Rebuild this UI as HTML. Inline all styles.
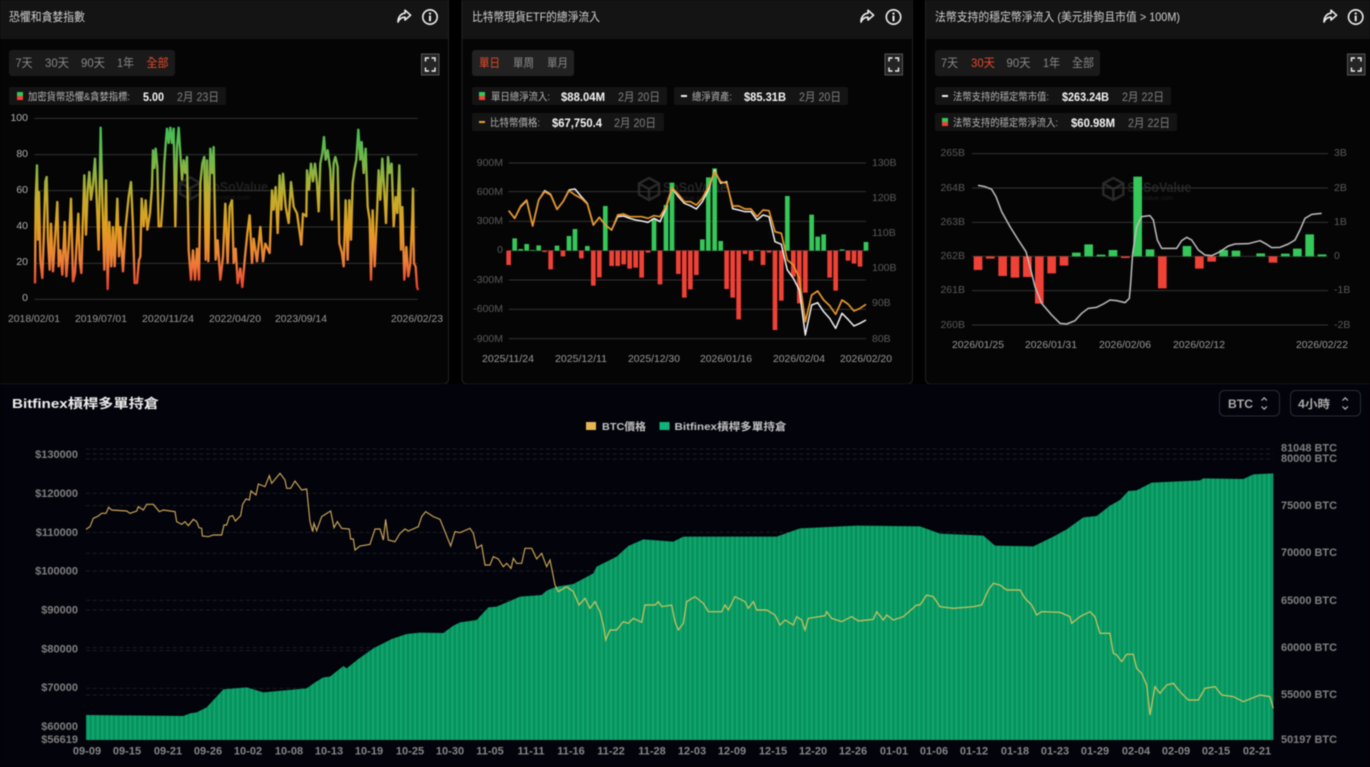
<!DOCTYPE html>
<html><head><meta charset="utf-8"><title>Dashboard</title>
<style>
html,body{margin:0;padding:0;background:#000;width:1370px;height:767px;overflow:hidden}
svg{display:block;position:absolute;left:0;top:0;filter:blur(.4px)}
text{font-family:"Liberation Sans","Noto Sans CJK TC",sans-serif;font-size:11px;fill:#999}
.ti{font-size:12px;fill:#d0d0d0}
.tb{font-size:12px;fill:#888}
.on{font-size:12px;fill:#e5492c}
.lg{font-size:10.5px;fill:#b5b5b5}
.v{font-size:12px;font-weight:700;fill:#f6f6f6}
.d{font-size:12px;fill:#808080}
.ax{font-size:10.5px;fill:#b0b0b0}
.ax2{font-size:10.5px;fill:#5a5a5a}
.xl{font-size:10.5px;fill:#9a9a9a}
.bl{font-size:11px;font-weight:700;fill:#808080}
.bx{font-size:11px;font-weight:700;fill:#868686;text-anchor:middle}
</style></head><body>
<svg width="1370" height="767" viewBox="0 0 1370 767" xmlns="http://www.w3.org/2000/svg">
<defs>
<linearGradient id="fg" gradientUnits="userSpaceOnUse" x1="0" y1="380" x2="0" y2="870">
<stop offset="0" stop-color="#3fbf55"/><stop offset=".2" stop-color="#72b84a"/><stop offset=".42" stop-color="#c0ad2c"/><stop offset=".62" stop-color="#e29e20"/><stop offset=".82" stop-color="#ee7f38"/><stop offset="1" stop-color="#ee3b30"/>
</linearGradient>
<pattern id="st" patternUnits="userSpaceOnUse" width="14" height="40" x="258"><rect width="14" height="40" fill="#07915b"/><rect x="4" width="6" height="40" fill="#12a670"/></pattern>
<clipPath id="ac"><polygon points="258,990 550,993 570,985 590,982 620,967 670,913 740,907 790,922 920,910 945,892 970,877 990,875 1030,843 1040,850 1075,822 1120,790 1175,762 1220,747 1260,743 1330,744 1360,722 1380,712 1430,705 1465,667 1490,665 1560,635 1625,630 1640,617 1670,605 1720,597 1780,565 1790,545 1850,515 1885,483 1930,463 2020,470 2050,455 2330,455 2400,430 2570,422 2760,424 2820,446 2950,452 2985,482 3100,484 3160,455 3200,433 3250,397 3290,393 3330,362 3360,345 3385,318 3410,316 3455,293 3600,286 3610,280 3730,282 3760,268 3820,265 3820,1065 258,1065"/></clipPath>
<polyline id="pr" fill="none" points="258,433 270,425 280,400 295,393 305,385 318,385 326,367 335,375 380,378 390,385 410,378 415,365 430,375 440,358 460,358 478,380 490,375 525,380 530,410 545,418 555,410 565,422 580,403 590,410 597,428 605,430 607,453 625,455 640,450 665,450 672,420 680,420 688,395 698,392 706,408 722,392 728,358 738,342 748,345 753,318 768,330 775,297 795,305 808,272 815,295 840,265 855,285 860,310 872,310 885,288 905,315 920,312 930,410 938,440 942,415 950,437 965,395 985,382 992,378 1002,428 1012,410 1025,430 1048,432 1052,462 1060,462 1065,495 1080,483 1110,478 1125,432 1140,432 1150,465 1157,403 1165,465 1185,470 1200,445 1215,432 1225,438 1255,425 1265,395 1277,380 1300,395 1320,403 1335,440 1352,483 1365,440 1380,443 1410,430 1420,445 1430,490 1445,480 1455,540 1470,540 1480,515 1495,522 1510,545 1520,535 1533,550 1540,520 1550,535 1565,535 1575,490 1595,490 1610,522 1625,505 1640,545 1650,525 1665,600 1675,620 1700,605 1720,620 1737,660 1755,640 1770,670 1785,650 1800,680 1810,720 1817,765 1830,735 1850,735 1870,710 1885,715 1900,700 1925,712 1935,660 1965,660 1975,650 1985,665 2015,660 2025,710 2035,735 2050,715 2060,650 2085,635 2110,655 2125,680 2165,680 2175,660 2185,675 2205,635 2235,650 2245,670 2260,650 2270,675 2300,675 2325,690 2340,720 2355,705 2380,720 2390,695 2405,705 2415,735 2425,700 2475,692 2480,680 2495,700 2525,710 2555,695 2575,708 2620,703 2630,680 2650,705 2660,690 2680,705 2710,695 2750,660 2760,660 2780,630 2800,635 2820,665 2860,670 2920,665 2945,660 2965,615 2980,595 3000,600 3020,615 3060,615 3075,640 3095,660 3110,690 3125,680 3180,682 3210,695 3215,715 3240,695 3270,680 3285,695 3300,745 3330,745 3340,805 3350,810 3365,830 3380,808 3400,808 3410,850 3425,865 3440,900 3450,990 3465,905 3480,925 3500,900 3520,895 3540,920 3565,945 3595,945 3615,910 3645,905 3665,930 3700,935 3730,950 3780,930 3810,935 3820,970"/>
<polyline id="fgl" fill="none" points="104,850 106,600 110,495 113,720 116,575 120,780 126,835 130,720 135,545 139,530 143,720 148,810 152,670 158,815 165,700 171,605 175,800 180,750 186,825 193,665 198,830 205,740 212,595 218,845 224,820 230,710 234,640 238,780 243,820 247,680 252,525 257,705 262,570 267,515 272,600 278,555 284,475 290,620 295,750 301,382 306,600 312,810 317,540 322,868 327,665 333,800 338,680 343,800 351,595 356,770 360,680 368,815 375,690 385,590 392,545 398,680 403,850 410,850 416,780 420,770 424,595 430,680 436,600 441,690 449,640 455,560 458,450 462,505 466,445 471,500 475,680 482,680 488,590 492,490 497,420 500,385 505,430 510,382 515,430 520,385 525,680 530,440 535,382 540,460 545,540 550,480 555,520 560,470 565,750 572,840 578,750 584,840 590,745 596,840 600,550 606,490 612,470 616,780 620,480 624,785 630,445 636,520 640,440 646,780 652,720 660,840 668,770 675,610 682,790 688,620 695,600 700,790 706,745 712,850 720,805 726,862 734,770 741,700 748,645 755,790 760,715 770,785 780,680 788,785 795,730 808,760 815,570 820,630 826,560 832,700 838,525 843,630 848,520 856,620 865,670 872,545 880,620 890,640 897,690 903,735 908,640 918,650 920,510 926,570 932,490 938,545 944,490 950,550 955,635 960,490 966,460 971,410 976,480 982,450 990,510 995,660 1000,490 1005,470 1012,500 1017,730 1025,760 1030,800 1036,600 1042,780 1047,600 1052,720 1057,550 1062,510 1068,480 1074,388 1080,480 1084,425 1090,520 1096,445 1102,620 1108,660 1112,840 1117,630 1123,800 1130,640 1135,510 1140,600 1146,475 1151,560 1157,670 1163,470 1168,520 1174,490 1180,680 1186,590 1191,640 1197,495 1202,750 1206,620 1212,840 1218,740 1224,830 1230,790 1236,650 1238,565 1241,790 1246,800 1250,860 1253,870"/>
<g id="share"><path d="M8 1.2 L13.6 6.2 L8 11 V8.2 C4.6 8 2.4 9.8 1 13 C1 8.2 3.6 4.6 8 4.2 Z" fill="none" stroke="#eee" stroke-width="1.6" stroke-linejoin="round"/></g>
<g id="info"><circle r="7.2" fill="none" stroke="#eee" stroke-width="1.6"/><rect x="-1" y="-1.4" width="2" height="5.6" fill="#eee"/><rect x="-1" y="-4.4" width="2" height="1.9" fill="#eee"/></g>
<g id="fs"><rect x=".5" y=".5" width="17.5" height="21" fill="#242424" stroke="#555"/><path d="M4.5 8 V4.5 H8 M10.5 4.5 H14 V8 M4.5 14 V17.5 H8 M10.5 17.5 H14 V14" fill="none" stroke="#eee" stroke-width="1.4"/></g>
<g id="sq"><rect width="6" height="4" fill="#35c759"/><rect y="4" width="6" height="4" fill="#ef4136"/></g>
<g id="wm"><path d="M0 -11 L10 -5.5 V5.5 L0 11 L-10 5.5 V-5.5 Z M-10 -5.5 L0 0 L10 -5.5 M0 0 V11" fill="none" stroke="#3a3a3a" stroke-width="2.4"/><text x="14" y="3" style="font-size:14px;font-weight:700;fill:#333" textLength="64" lengthAdjust="spacingAndGlyphs">SoSoValue</text><text x="16" y="11" style="font-size:6px;fill:#2c2c2c" textLength="44" lengthAdjust="spacingAndGlyphs">sosovalue.com</text></g>
</defs>

<rect width="1370" height="767" fill="#000"/>

<!-- PANEL 1 -->
<rect x="-4" y="-4" width="452.500" height="388" rx="5" fill="#050505" stroke="#222"/>
<rect x="0" y="0" width="448" height="39" fill="#141414"/>
<text class="ti" x="9" y="21" textLength="76" lengthAdjust="spacingAndGlyphs">恐懼和貪婪指數</text>
<use href="#share" x="397" y="9"/><use href="#info" x="430" y="17"/>
<rect x="9" y="50" width="166" height="26" rx="3" fill="#1a1a1a"/>
<text class="tb" x="15.500" y="67" textLength="17" lengthAdjust="spacingAndGlyphs">7天</text>
<text class="tb" x="45" y="67" textLength="24" lengthAdjust="spacingAndGlyphs">30天</text>
<text class="tb" x="81" y="67" textLength="24" lengthAdjust="spacingAndGlyphs">90天</text>
<text class="tb" x="117" y="67" textLength="17" lengthAdjust="spacingAndGlyphs">1年</text>
<text class="on" x="146.500" y="67" textLength="22" lengthAdjust="spacingAndGlyphs">全部</text>
<use href="#fs" x="421" y="53.500"/>
<rect x="9" y="87" width="217" height="18" rx="2" fill="#141414"/>
<use href="#sq" x="17" y="92"/>
<text class="lg" x="28" y="100" textLength="102" lengthAdjust="spacingAndGlyphs">加密貨幣恐懼&amp;貪婪指標:</text>
<text class="v" x="143" y="101" textLength="21" lengthAdjust="spacingAndGlyphs">5.00</text>
<text class="d" x="177" y="101" textLength="42" lengthAdjust="spacingAndGlyphs">2月 23日</text>
<g text-anchor="end">
<text class="ax" x="28" y="121">100</text><text class="ax" x="28" y="157">80</text><text class="ax" x="28" y="193">60</text><text class="ax" x="28" y="229">40</text><text class="ax" x="28" y="265">20</text><text class="ax" x="28" y="301">0</text>
</g>
<text class="xl" x="8" y="322" textLength="52" lengthAdjust="spacingAndGlyphs">2018/02/01</text>
<text class="xl" x="75" y="322" textLength="52" lengthAdjust="spacingAndGlyphs">2019/07/01</text>
<text class="xl" x="142" y="322" textLength="52" lengthAdjust="spacingAndGlyphs">2020/11/24</text>
<text class="xl" x="209" y="322" textLength="52" lengthAdjust="spacingAndGlyphs">2022/04/20</text>
<text class="xl" x="275" y="322" textLength="52" lengthAdjust="spacingAndGlyphs">2023/09/14</text>
<text class="xl" x="391" y="322" textLength="52" lengthAdjust="spacingAndGlyphs">2026/02/23</text>
<g transform="scale(.33333)">
<path d="M103 355H1253M103 464H1253M103 572H1253M103 681H1253M103 790H1253M103 898H1253" stroke="#333" stroke-width="3"/>
<use href="#wm" transform="translate(570,565) scale(3)" opacity=".6"/>
<use href="#fgl" stroke="url(#fg)" stroke-width="5" stroke-linejoin="round"/>
<use href="#fgl" stroke="url(#fg)" stroke-width="3" stroke-linejoin="round" transform="translate(3,0)"/>
</g>

<!-- PANEL 2 -->
<rect x="462" y="-4" width="450.500" height="388" rx="5" fill="#050505" stroke="#222"/>
<rect x="462.500" y="0" width="450" height="39" fill="#141414"/>
<text class="ti" x="472" y="21" textLength="128" lengthAdjust="spacingAndGlyphs">比特幣現貨ETF的總淨流入</text>
<use href="#share" x="860" y="9"/><use href="#info" x="893.500" y="17"/>
<rect x="472" y="50" width="102" height="26" rx="3" fill="#222"/>
<text class="on" x="479" y="67" textLength="21" lengthAdjust="spacingAndGlyphs">單日</text>
<text class="tb" x="513" y="67" textLength="21" lengthAdjust="spacingAndGlyphs">單周</text>
<text class="tb" x="547" y="67" textLength="21" lengthAdjust="spacingAndGlyphs">單月</text>
<use href="#fs" x="884.500" y="53.500"/>
<rect x="472" y="87" width="195" height="18" rx="2" fill="#141414"/>
<use href="#sq" x="479" y="92"/>
<text class="lg" x="491" y="100" textLength="59" lengthAdjust="spacingAndGlyphs">單日總淨流入:</text>
<text class="v" x="561" y="101" textLength="44" lengthAdjust="spacingAndGlyphs">$88.04M</text>
<text class="d" x="618" y="101" textLength="42" lengthAdjust="spacingAndGlyphs">2月 20日</text>
<rect x="674" y="87" width="174" height="18" rx="2" fill="#141414"/>
<rect x="681" y="95" width="6" height="2" fill="#eee"/>
<text class="lg" x="692" y="100" textLength="40" lengthAdjust="spacingAndGlyphs">總淨資產:</text>
<text class="v" x="744" y="101" textLength="42" lengthAdjust="spacingAndGlyphs">$85.31B</text>
<text class="d" x="799" y="101" textLength="42" lengthAdjust="spacingAndGlyphs">2月 20日</text>
<rect x="472" y="113" width="192" height="18" rx="2" fill="#141414"/>
<rect x="479" y="121" width="6" height="2" fill="#f0a030"/>
<text class="lg" x="490" y="126" textLength="50" lengthAdjust="spacingAndGlyphs">比特幣價格:</text>
<text class="v" x="552" y="127" textLength="50" lengthAdjust="spacingAndGlyphs">$67,750.4</text>
<text class="d" x="614" y="127" textLength="42" lengthAdjust="spacingAndGlyphs">2月 20日</text>
<g text-anchor="end">
<text class="ax2" x="503" y="166">900M</text><text class="ax2" x="503" y="195">600M</text><text class="ax2" x="503" y="224">300M</text><text class="ax2" x="503" y="253">0</text><text class="ax2" x="503" y="283">-300M</text><text class="ax2" x="503" y="312">-600M</text><text class="ax2" x="503" y="342">-900M</text>
</g>
<text class="ax2" x="872" y="166">130B</text><text class="ax2" x="872" y="201">120B</text><text class="ax2" x="872" y="236">110B</text><text class="ax2" x="872" y="271">100B</text><text class="ax2" x="872" y="306">90B</text><text class="ax2" x="872" y="342">80B</text>
<text class="xl" x="482" y="362" textLength="52" lengthAdjust="spacingAndGlyphs">2025/11/24</text>
<text class="xl" x="555" y="362" textLength="52" lengthAdjust="spacingAndGlyphs">2025/12/11</text>
<text class="xl" x="628" y="362" textLength="52" lengthAdjust="spacingAndGlyphs">2025/12/30</text>
<text class="xl" x="700" y="362" textLength="52" lengthAdjust="spacingAndGlyphs">2026/01/16</text>
<text class="xl" x="773" y="362" textLength="52" lengthAdjust="spacingAndGlyphs">2026/02/04</text>
<text class="xl" x="840" y="362" textLength="52" lengthAdjust="spacingAndGlyphs">2026/02/20</text>
<g transform="translate(460,0) scale(.33333)">
<path d="M146 489H1218M146 575H1218M146 664H1218M146 752H1218M146 840H1218M146 928H1218M146 1016H1218" stroke="#333" stroke-width="3"/>
<use href="#wm" transform="translate(567,567) scale(3)" opacity=".7"/>
<path fill="#ef4136" d="M139 752h14v43h-14zM247 752h14v4h-14zM265 752h14v56h-14zM302 752h14v17h-14zM357 752h14v23h-14zM393 752h14v105h-14zM411 752h14v80h-14zM448 752h14v46h-14zM466 752h14v46h-14zM484 752h14v41h-14zM502 752h14v54h-14zM520 752h14v51h-14zM538 752h14v81h-14zM557 752h14v6h-14zM593 752h14v101h-14zM648 752h14v70h-14zM666 752h14v141h-14zM684 752h14v116h-14zM702 752h14v73h-14zM793 752h14v115h-14zM811 752h14v141h-14zM829 752h14v206h-14zM848 752h14v10h-14zM866 752h14v30h-14zM902 752h14v43h-14zM920 752h14v6h-14zM938 752h14v238h-14zM957 752h14v150h-14zM993 752h14v78h-14zM1011 752h14v158h-14zM1029 752h14v126h-14zM1102 752h14v81h-14zM1120 752h14v120h-14zM1157 752h14v30h-14zM1175 752h14v39h-14zM1193 752h14v48h-14z"/>
<path fill="#35c759" d="M157 715h14v37h-14zM175 747h14v5h-14zM193 732h14v20h-14zM211 750h14v2h-14zM229 736h14v16h-14zM284 737h14v15h-14zM320 708h14v44h-14zM338 687h14v65h-14zM375 738h14v14h-14zM429 618h14v134h-14zM575 655h14v97h-14zM611 615h14v137h-14zM629 548h14v204h-14zM720 718h14v34h-14zM738 532h14v220h-14zM757 505h14v247h-14zM775 723h14v29h-14zM884 750h14v2h-14zM975 588h14v164h-14zM1048 644h14v108h-14zM1066 710h14v42h-14zM1084 703h14v49h-14zM1139 748h14v4h-14zM1211 726h14v26h-14z"/>
<polyline fill="none" stroke="#f0f0f0" stroke-width="4.500" stroke-linejoin="round" points="146,632 164,655 182,620 200,602 218,678 236,600 254,572 272,583 291,628 309,605 327,570 345,567 364,590 382,610 400,675 418,652 436,675 455,690 473,650 491,648 509,655 527,660 545,663 564,667 582,655 600,665 618,625 636,565 655,590 673,610 691,617 709,627 727,605 745,570 764,510 782,550 800,545 818,626 836,630 855,635 873,635 891,660 909,645 927,650 945,725 964,733 982,810 1000,835 1018,870 1036,1005 1055,915 1073,908 1091,935 1109,955 1127,985 1146,940 1164,958 1182,978 1200,970 1218,960"/>
<polyline fill="none" stroke="#e8952a" stroke-width="5" stroke-linejoin="round" points="146,632 164,655 182,618 200,600 218,678 236,600 254,575 272,585 291,628 309,605 327,572 345,585 364,595 382,612 400,675 418,652 436,675 455,690 473,645 491,642 509,650 527,650 545,650 564,655 582,647 600,650 618,620 636,563 655,583 673,605 691,605 709,615 727,595 745,560 764,515 782,545 800,550 818,618 836,618 855,627 873,627 891,650 909,630 927,632 945,695 964,700 982,780 1000,795 1018,835 1036,965 1055,885 1073,873 1091,900 1109,917 1127,943 1146,900 1164,912 1182,933 1200,925 1218,913"/>
</g>

<!-- PANEL 3 -->
<rect x="925.500" y="-4" width="450" height="388" rx="5" fill="#050505" stroke="#222"/>
<rect x="926" y="0" width="444" height="39" fill="#141414"/>
<text class="ti" x="935" y="21" textLength="245" lengthAdjust="spacingAndGlyphs">法幣支持的穩定幣淨流入 (美元掛鉤且市值 &gt; 100M)</text>
<use href="#share" x="1323" y="9"/><use href="#info" x="1355.700" y="17"/>
<rect x="935" y="50" width="165" height="26" rx="3" fill="#1a1a1a"/>
<text class="tb" x="941" y="67" textLength="17" lengthAdjust="spacingAndGlyphs">7天</text>
<text class="on" x="971" y="67" textLength="24" lengthAdjust="spacingAndGlyphs">30天</text>
<text class="tb" x="1006.500" y="67" textLength="24" lengthAdjust="spacingAndGlyphs">90天</text>
<text class="tb" x="1043" y="67" textLength="17" lengthAdjust="spacingAndGlyphs">1年</text>
<text class="tb" x="1072" y="67" textLength="22" lengthAdjust="spacingAndGlyphs">全部</text>
<use href="#fs" x="1347" y="53.500"/>
<rect x="935" y="87" width="236" height="18" rx="2" fill="#141414"/>
<rect x="942" y="95" width="6" height="2" fill="#eee"/>
<text class="lg" x="953" y="100" textLength="96" lengthAdjust="spacingAndGlyphs">法幣支持的穩定幣市值:</text>
<text class="v" x="1062" y="101" textLength="47" lengthAdjust="spacingAndGlyphs">$263.24B</text>
<text class="d" x="1122" y="101" textLength="42" lengthAdjust="spacingAndGlyphs">2月 22日</text>
<rect x="935" y="113" width="242" height="18" rx="2" fill="#141414"/>
<use href="#sq" x="942" y="118"/>
<text class="lg" x="953" y="126" textLength="105" lengthAdjust="spacingAndGlyphs">法幣支持的穩定幣淨流入:</text>
<text class="v" x="1071" y="127" textLength="44" lengthAdjust="spacingAndGlyphs">$60.98M</text>
<text class="d" x="1128" y="127" textLength="42" lengthAdjust="spacingAndGlyphs">2月 22日</text>
<g text-anchor="end">
<text class="ax2" x="965" y="156">265B</text><text class="ax2" x="965" y="191">264B</text><text class="ax2" x="965" y="225">263B</text><text class="ax2" x="965" y="259">262B</text><text class="ax2" x="965" y="293">261B</text><text class="ax2" x="965" y="328">260B</text>
</g>
<text class="ax2" x="1334" y="156">3B</text><text class="ax2" x="1334" y="191">2B</text><text class="ax2" x="1334" y="225">1B</text><text class="ax2" x="1334" y="259">0</text><text class="ax2" x="1334" y="293">-1B</text><text class="ax2" x="1334" y="328">-2B</text>
<text class="xl" x="952" y="348" textLength="52" lengthAdjust="spacingAndGlyphs">2026/01/25</text>
<text class="xl" x="1025" y="348" textLength="52" lengthAdjust="spacingAndGlyphs">2026/01/31</text>
<text class="xl" x="1099" y="348" textLength="52" lengthAdjust="spacingAndGlyphs">2026/02/06</text>
<text class="xl" x="1173" y="348" textLength="52" lengthAdjust="spacingAndGlyphs">2026/02/12</text>
<text class="xl" x="1296" y="348" textLength="52" lengthAdjust="spacingAndGlyphs">2026/02/22</text>
<g transform="translate(920,0) scale(.33333)">
<path d="M156 461H1224M156 564H1224M156 667H1224M156 769H1224M156 872H1224M156 975H1224" stroke="#333" stroke-width="3"/>
<use href="#wm" transform="translate(580,567) scale(3)" opacity=".7"/>
<path fill="#ef4136" d="M161 769h26v41h-26zM198 769h26v7h-26zM235 769h26v59h-26zM272 769h26v64h-26zM309 769h26v62h-26zM345 769h26v142h-26zM382 769h26v51h-26zM419 769h26v28h-26zM603 769h26v5h-26zM714 769h26v96h-26zM825 769h26v37h-26zM862 769h26v16h-26zM1046 769h26v19h-26z"/>
<path fill="#35c759" d="M456 758h26v11h-26zM493 733h26v36h-26zM530 764h26v5h-26zM566 750h26v19h-26zM640 530h26v239h-26zM677 748h26v21h-26zM788 738h26v31h-26zM898 750h26v19h-26zM935 752h26v17h-26zM1009 760h26v9h-26zM1083 761h26v8h-26zM1119 746h26v23h-26zM1156 703h26v66h-26zM1193 763h26v6h-26z"/>
<polyline fill="none" stroke="#bdbdbd" stroke-width="4.500" stroke-linejoin="round" points="174,556 195,560 215,568 228,590 245,635 270,680 295,720 318,755 330,800 345,860 365,910 395,945 420,970 440,972 465,962 485,940 505,925 530,922 550,912 570,900 590,902 615,908 628,895 632,850 638,760 650,680 665,650 690,647 700,660 712,720 725,745 770,745 785,722 800,712 815,720 835,750 855,765 875,767 900,755 925,738 945,732 985,731 1020,722 1040,733 1055,743 1080,742 1105,732 1125,720 1140,690 1155,655 1175,643 1205,640"/>
</g>

<!-- BOTTOM -->
<rect x="0" y="384" width="1370" height="383" fill="#03030b"/>
<text x="12" y="408" style="font-size:13px;font-weight:700;fill:#eee" textLength="147" lengthAdjust="spacingAndGlyphs">Bitfinex槓桿多單持倉</text>
<rect x="586" y="422" width="10" height="8" fill="#e6b553"/>
<text x="602" y="430" style="font-size:10.5px;font-weight:700;fill:#c4c4c4" textLength="44" lengthAdjust="spacingAndGlyphs">BTC價格</text>
<rect x="659.500" y="422" width="10" height="8" fill="#10b17a"/>
<text x="674.500" y="430" style="font-size:10.5px;font-weight:700;fill:#c4c4c4" textLength="112" lengthAdjust="spacingAndGlyphs">Bitfinex槓桿多單持倉</text>
<rect x="1219.500" y="390.500" width="60" height="25.500" rx="5" fill="none" stroke="#2a2d33"/>
<text x="1228" y="408" style="font-size:11.500px;font-weight:700;fill:#aaa" textLength="25" lengthAdjust="spacingAndGlyphs">BTC</text>
<path d="M1261.500 400.500l2.700-2.700 2.700 2.700M1261.500 406.500l2.700 2.700 2.700-2.700" fill="none" stroke="#bbb" stroke-width="1.200"/>
<rect x="1290.500" y="390.500" width="70" height="25.500" rx="5" fill="none" stroke="#2a2d33"/>
<text x="1298" y="408" style="font-size:11.500px;font-weight:700;fill:#aaa" textLength="32" lengthAdjust="spacingAndGlyphs">4小時</text>
<path d="M1342.500 400.500l2.700-2.700 2.700 2.700M1342.500 406.500l2.700 2.700 2.700-2.700" fill="none" stroke="#bbb" stroke-width="1.200"/>
<g transform="translate(0,385) scale(.33333)">
<path d="M258 192H3820M258 207H3820M258 222H3820M258 325H3820M258 362H3820M258 442H3820M258 505H3820M258 558H3820M258 646H3820M258 675H3820M258 788H3820M258 797H3820M258 910H3820M258 930H3820" stroke="#1c1e22" stroke-width="3" stroke-dasharray="12 8"/>
<polygon fill="url(#st)" points="258,990 550,993 570,985 590,982 620,967 670,913 740,907 790,922 920,910 945,892 970,877 990,875 1030,843 1040,850 1075,822 1120,790 1175,762 1220,747 1260,743 1330,744 1360,722 1380,712 1430,705 1465,667 1490,665 1560,635 1625,630 1640,617 1670,605 1720,597 1780,565 1790,545 1850,515 1885,483 1930,463 2020,470 2050,455 2330,455 2400,430 2570,422 2760,424 2820,446 2950,452 2985,482 3100,484 3160,455 3200,433 3250,397 3290,393 3330,362 3360,345 3385,318 3410,316 3455,293 3600,286 3610,280 3730,282 3760,268 3820,265 3820,1065 258,1065"/>
<use href="#pr" stroke="#c8a457" stroke-width="3.500"/>
<use href="#pr" stroke="#bfc462" stroke-width="3.500" clip-path="url(#ac)"/>
</g>
<g text-anchor="end">
<text class="bl" x="78" y="458">$130000</text><text class="bl" x="78" y="497">$120000</text><text class="bl" x="78" y="536">$110000</text><text class="bl" x="78" y="574.500">$100000</text><text class="bl" x="78" y="613.500">$90000</text><text class="bl" x="78" y="652.500">$80000</text><text class="bl" x="78" y="691">$70000</text><text class="bl" x="78" y="730">$60000</text><text class="bl" x="78" y="743">$56619</text>
</g>
<text class="bl" x="1281" y="451.500" textLength="56" lengthAdjust="spacingAndGlyphs">81048 BTC</text>
<text class="bl" x="1281" y="462" textLength="56" lengthAdjust="spacingAndGlyphs">80000 BTC</text>
<text class="bl" x="1281" y="509" textLength="56" lengthAdjust="spacingAndGlyphs">75000 BTC</text>
<text class="bl" x="1281" y="556" textLength="56" lengthAdjust="spacingAndGlyphs">70000 BTC</text>
<text class="bl" x="1281" y="604" textLength="56" lengthAdjust="spacingAndGlyphs">65000 BTC</text>
<text class="bl" x="1281" y="651" textLength="56" lengthAdjust="spacingAndGlyphs">60000 BTC</text>
<text class="bl" x="1281" y="698" textLength="56" lengthAdjust="spacingAndGlyphs">55000 BTC</text>
<text class="bl" x="1281" y="743" textLength="56" lengthAdjust="spacingAndGlyphs">50197 BTC</text>
<text class="bx" x="87" y="754.500">09-09</text><text class="bx" x="127" y="754.500">09-15</text><text class="bx" x="168" y="754.500">09-21</text><text class="bx" x="208" y="754.500">09-26</text><text class="bx" x="248" y="754.500">10-02</text><text class="bx" x="289" y="754.500">10-08</text><text class="bx" x="329" y="754.500">10-13</text><text class="bx" x="369" y="754.500">10-19</text><text class="bx" x="410" y="754.500">10-25</text><text class="bx" x="450" y="754.500">10-30</text><text class="bx" x="490" y="754.500">11-05</text><text class="bx" x="531" y="754.500">11-11</text><text class="bx" x="571" y="754.500">11-16</text><text class="bx" x="611" y="754.500">11-22</text><text class="bx" x="652" y="754.500">11-28</text><text class="bx" x="692" y="754.500">12-03</text><text class="bx" x="732" y="754.500">12-09</text><text class="bx" x="773" y="754.500">12-15</text><text class="bx" x="813" y="754.500">12-20</text><text class="bx" x="853" y="754.500">12-26</text><text class="bx" x="894" y="754.500">01-01</text><text class="bx" x="934" y="754.500">01-06</text><text class="bx" x="974" y="754.500">01-12</text><text class="bx" x="1015" y="754.500">01-18</text><text class="bx" x="1055" y="754.500">01-23</text><text class="bx" x="1095" y="754.500">01-29</text><text class="bx" x="1136" y="754.500">02-04</text><text class="bx" x="1176" y="754.500">02-09</text><text class="bx" x="1216" y="754.500">02-15</text><text class="bx" x="1257" y="754.500">02-21</text>
</svg>
</body></html>
